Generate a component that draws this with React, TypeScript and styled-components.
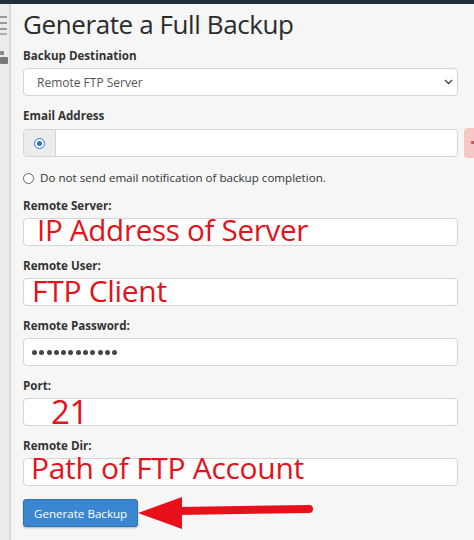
import React from 'react';
import styled, { createGlobalStyle } from 'styled-components';

const Global = createGlobalStyle`
  html,body{margin:0;padding:0;background:#f6f6f6;overflow:hidden;}
  body{font-family:"Open Sans","Noto Sans",sans-serif;color:#333;}
`;

/* ── Shell ── */
const Shell = styled.div`width:474px;height:540px;display:flex;flex-direction:column;overflow:hidden;`;
const TopBar = styled.div`height:4px;background:#1f2f3e;flex:none;`;
const Body = styled.div`flex:1;display:flex;min-height:0;`;
const Side = styled.div`
  width:9px;flex:none;background:#ececec;border-right:2px solid #dadada;
  display:flex;flex-direction:column;align-items:flex-start;padding-top:11px;gap:16px;
`;
const Main = styled.div`flex:1;padding:0 0 0 12px;min-width:0;`;

const Title = styled.h1`
  margin:4px 0 7px;font-size:26px;line-height:32px;font-weight:400;color:#2b2b2b;letter-spacing:-.4px;
`;

/* ── Form ── */
const Field = styled.div<{$gap?:number}>`width:435px;margin-bottom:${p=>p.$gap??11}px;`;
const Label = styled.div`font-size:11.6px;font-weight:700;line-height:18px;color:#333;margin-bottom:3px;`;

const Select = styled.div`
  height:28px;box-sizing:border-box;background:#fff;border:1px solid #d4d4d4;border-radius:4px;
  display:flex;align-items:center;justify-content:space-between;padding:0 4px 0 13px;
  font-size:12px;color:#555;
`;

const EmailRow = styled.div`display:flex;align-items:center;gap:6px;`;
const Group = styled.div`
  width:435px;flex:none;height:28px;box-sizing:border-box;display:flex;
  border:1px solid #d4d4d4;border-radius:4px;overflow:hidden;background:#fff;
`;
const Addon = styled.div`
  width:31px;flex:none;background:#ececec;border-right:1px solid #d4d4d4;
  display:flex;align-items:center;justify-content:center;
`;
const Radio = styled.span<{$on?:boolean}>`
  width:11px;height:11px;border-radius:50%;box-sizing:border-box;display:inline-block;flex:none;
  border:1px solid ${p=>p.$on?'#2a6fd6':'#666'};background:#fff;position:relative;
  &::after{content:'';position:absolute;inset:2px;border-radius:50%;background:${p=>p.$on?'#2a6fd6':'transparent'};}
`;
const ErrTab = styled.div`
  width:20px;height:30px;flex:none;border-radius:4px;background:#f6c7c4;position:relative;
  &::after{content:'';position:absolute;left:7px;top:13px;width:4px;height:3px;background:#d9534f;border-radius:1px;}
`;

const CheckLine = styled.label`
  display:flex;align-items:center;gap:6px;font-size:11.6px;line-height:18px;color:#333;
  margin:11px 0 10px 0;
`;

const Box = styled.div`
  height:28px;box-sizing:border-box;background:#fff;border:1px solid #d4d4d4;border-radius:4px;
  display:flex;align-items:center;position:relative;
`;
const Note = styled.span<{$x:number;$size:number;$y:number}>`
  position:absolute;left:${p=>p.$x}px;top:${p=>p.$y}px;white-space:nowrap;
  font-family:"Open Sans","Noto Sans",sans-serif;font-size:${p=>p.$size}px;line-height:1;
  color:#e3121b;letter-spacing:-.3px;
`;
const Dots = styled.div`display:flex;gap:2.3px;margin-left:8px;`;
const Dot = styled.span`width:5px;height:5px;border-radius:50%;background:#454545;`;

/* ── Submit ── */
const SubmitRow = styled.div`display:flex;align-items:center;margin-top:10px;`;
const Button = styled.button`
  height:28px;padding:0 10px;border:1px solid #2f73b8;border-radius:3px;background:#3a86d1;
  color:#fff;font-family:inherit;font-size:11.6px;box-shadow:0 1px 2px rgba(0,0,0,.25);cursor:pointer;
`;

const Arrow = () => (
  <svg width="178" height="34" viewBox="0 0 178 34" style={{marginLeft:-1}}>
    <path d="M1 17 L45 1 L45 33 Z" fill="#e8101b"/>
    <line x1="40" y1="15" x2="172" y2="13" stroke="#e8101b" strokeWidth="8" strokeLinecap="round"/>
  </svg>
);

const SideIcons = () => (
  <>
    <svg width="7" height="20" viewBox="0 0 7 20">
      <rect x="0" y="1" width="7" height="2" fill="#9a9a9a"/>
      <rect x="0" y="7" width="7" height="2" fill="#9a9a9a"/>
      <rect x="0" y="13" width="7" height="2" fill="#9a9a9a"/>
      <rect x="0" y="18" width="7" height="2" fill="#b0b0b0"/>
    </svg>
    <svg width="8" height="14" viewBox="0 0 8 14">
      <rect x="0" y="0" width="4" height="4" fill="#8a8a8a"/>
      <rect x="0" y="6" width="8" height="7" rx="1" fill="#7a7a7a"/>
    </svg>
  </>
);

const App: React.FC = () => (
  <Shell>
    <Global/>
    <TopBar/>
    <Body>
      <Side><SideIcons/></Side>
      <Main>
        <Title>Generate a Full Backup</Title>

        <Field>
          <Label>Backup Destination</Label>
          <Select>
            Remote FTP Server
            <svg width="9" height="6" viewBox="0 0 9 6"><path d="M1 1 L4.5 4.5 L8 1" fill="none" stroke="#444" strokeWidth="1.4"/></svg>
          </Select>
        </Field>

        <Field $gap={0}>
          <Label>Email Address</Label>
          <EmailRow>
            <Group>
              <Addon><Radio $on/></Addon>
            </Group>
            <ErrTab/>
          </EmailRow>
        </Field>

        <CheckLine><Radio/>Do not send email notification of backup completion.</CheckLine>

        <Field>
          <Label>Remote Server:</Label>
          <Box><Note $x={13} $y={-4} $size={29.6}>IP Address of Server</Note></Box>
        </Field>

        <Field>
          <Label>Remote User:</Label>
          <Box><Note $x={8} $y={-3} $size={30}>FTP Client</Note></Box>
        </Field>

        <Field>
          <Label>Remote Password:</Label>
          <Box><Dots>{Array.from({length:12},(_,i)=><Dot key={i}/>)}</Dots></Box>
        </Field>

        <Field>
          <Label>Port:</Label>
          <Box><Note $x={27} $y={-4} $size={33}>21</Note></Box>
        </Field>

        <Field $gap={0}>
          <Label>Remote Dir:</Label>
          <Box><Note $x={7} $y={-6} $size={30}>Path of FTP Account</Note></Box>
        </Field>

        <SubmitRow>
          <Button>Generate Backup</Button>
          <Arrow/>
        </SubmitRow>
      </Main>
    </Body>
  </Shell>
);

export default App;
